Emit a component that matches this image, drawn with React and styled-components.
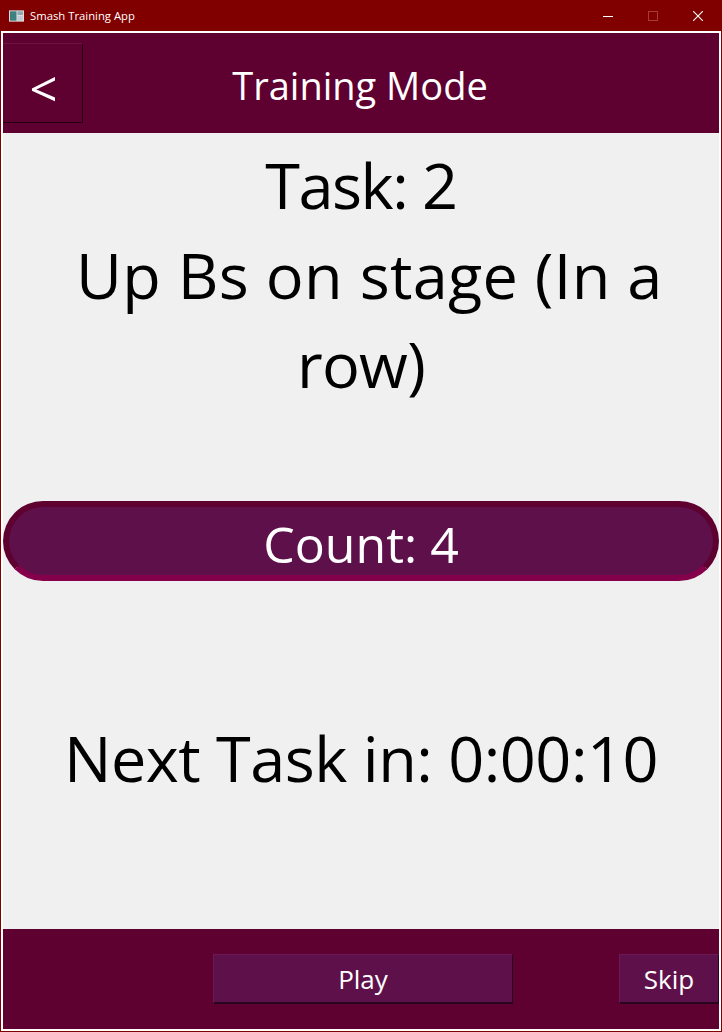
import React from 'react'
import styled, { createGlobalStyle } from 'styled-components'

const Global = createGlobalStyle`
html, body { margin: 0; padding: 0; background: #800000; }
* { box-sizing: border-box; }
`

export default function App() {
  return (
    <Win>
      <Global />
      <TitleBar>
        <AppIcon viewBox="0 0 16 12">
          <rect x="0" y="0" width="16" height="12" fill="#e0e0e0" />
          <rect x="1" y="1" width="7" height="10" fill="#3f7f80" />
          <rect x="9" y="1" width="6" height="4" fill="#8fa8b4" />
          <rect x="9" y="6" width="6" height="5" fill="#c0ccd2" />
        </AppIcon>
        <AppName>Smash Training App</AppName>
        <Controls>
          <CtrlBtn>
            <svg width="10" height="10" viewBox="0 0 10 10"><path d="M0 5.5h10" stroke="#fff" strokeWidth="1" /></svg>
          </CtrlBtn>
          <CtrlBtn>
            <svg width="10" height="10" viewBox="0 0 10 10"><rect x="0.5" y="0.5" width="9" height="9" fill="none" stroke="#a83a3a" strokeWidth="1" /></svg>
          </CtrlBtn>
          <CtrlBtn>
            <svg width="10" height="10" viewBox="0 0 10 10"><path d="M0 0l10 10M10 0L0 10" stroke="#fff" strokeWidth="1.1" /></svg>
          </CtrlBtn>
        </Controls>
      </TitleBar>
      <Client>
        <Header>
          <BackButton>&lt;</BackButton>
          <HeaderTitle>Training Mode</HeaderTitle>
        </Header>
        <Main>
          <TaskText>
            <TaskLine $track={-1.5}>Task: 2</TaskLine>
            <TaskLine $track={0.3}>&nbsp;Up Bs on stage (In a</TaskLine>
            <TaskLine $track={-0.8}>row)</TaskLine>
          </TaskText>
          <CountPill>Count: 4</CountPill>
          <NextTask>Next Task in: 0:00:10</NextTask>
        </Main>
        <Footer>
          <PlayButton>Play</PlayButton>
          <SkipButton>Skip</SkipButton>
        </Footer>
      </Client>
    </Win>
  )
}

const Win = styled.div`
width:722px;
height:1032px;
display:flex;
flex-direction:column;
background-color:#800000;
padding:0 1px 1px 1px;
font-family:"Open Sans","Noto Sans",sans-serif;
overflow:hidden;
`
const TitleBar = styled.div`
height:31px;
flex-shrink:0;
display:flex;
align-items:center;
padding-left:8px;
color:white;
`
const AppIcon = styled.svg`
width:15px;
height:12px;
margin-right:6px;
`
const AppName = styled.span`
font-size:11.3px;
flex-grow:1;
`
const Controls = styled.div`
display:flex;
align-items:center;
padding-right:1px;
`
const CtrlBtn = styled.div`
width:45px;
height:30px;
display:flex;
align-items:center;
justify-content:center;
`
const Client = styled.div`
flex-grow:1;
display:flex;
flex-direction:column;
border:2px solid white;
background-color:#f0f0f0;
`
const Header = styled.div`
height:100px;
flex-shrink:0;
background-color:#5e0030;
display:flex;
align-items:center;
`
const BackButton = styled.div`
width:80px;
height:80px;
display:flex;
align-items:center;
justify-content:center;
padding-top:9px;
padding-left:2px;
font-size:49px;
color:white;
background-color:#5e0030;
border-top:1px solid #6e1040;
border-right:1px solid #22000f;
border-bottom:1px solid #22000f;
`
const HeaderTitle = styled.div`
flex-grow:1;
text-align:center;
font-size:38px;
color:white;
padding-right:82px;
padding-top:3px;
`
const Main = styled.div`
flex-grow:1;
display:flex;
flex-direction:column;
align-items:center;
`
const TaskText = styled.div`
font-size:63px;
line-height:89.5px;
text-align:center;
color:black;
height:368px;
padding-top:7px;
white-space:nowrap;
`
const TaskLine = styled.div`
letter-spacing:${props => props.$track}px;
`
const CountPill = styled.div`
width:716px;
height:80px;
border-radius:40px;
background-color:#5e104b;
border:6px solid;
border-color:#5e0030 #5e0030 #85004a #5e0030;
color:white;
font-size:50px;
padding-top:5px;
display:flex;
align-items:center;
justify-content:center;
`
const NextTask = styled.div`
font-size:63px;
letter-spacing:-0.5px;
color:black;
margin-top:132px;
line-height:89px;
white-space:nowrap;
`
const Footer = styled.div`
height:100px;
flex-shrink:0;
background-color:#5e0030;
display:flex;
align-items:center;
padding-left:210px;
`
const ActionButton = styled.div`
height:50px;
display:flex;
align-items:center;
justify-content:center;
background-color:#5e104b;
color:white;
font-size:26px;
border-top:1px solid #6a1a55;
border-left:1px solid #6a1a55;
border-right:1px solid #2a0520;
border-bottom:2px solid #2a0520;
`
const PlayButton = styled(ActionButton)`
width:300px;
`
const SkipButton = styled(ActionButton)`
width:100px;
margin-left:106px;
`
